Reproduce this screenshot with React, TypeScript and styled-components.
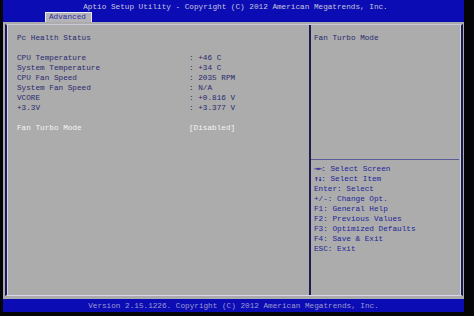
import React from 'react';
import styled, { createGlobalStyle } from 'styled-components';

interface InfoRow {
  label: string;
  value: string;
}

interface HelpLine {
  keys: string;
  glyph?: boolean;
  text: string;
}

const rows: InfoRow[] = [
  { label: 'CPU Temperature', value: ': +46 C' },
  { label: 'System Temperature', value: ': +34 C' },
  { label: 'CPU Fan Speed', value: ': 2035 RPM' },
  { label: 'System Fan Speed', value: ': N/A' },
  { label: 'VCORE', value: ': +0.816 V' },
  { label: '+3.3V', value: ': +3.377 V' },
];

const helpLines: HelpLine[] = [
  { keys: '\u2192\u2190', glyph: true, text: ': Select Screen' },
  { keys: '\u2191\u2193', glyph: true, text: ': Select Item' },
  { keys: 'Enter', text: ': Select' },
  { keys: '+/-', text: ': Change Opt.' },
  { keys: 'F1', text: ': General Help' },
  { keys: 'F2', text: ': Previous Values' },
  { keys: 'F3', text: ': Optimized Defaults' },
  { keys: 'F4', text: ': Save & Exit' },
  { keys: 'ESC', text: ': Exit' },
];

const GlobalStyle = createGlobalStyle`
  html, body {
    margin: 0;
    padding: 0;
    background: #050508;
  }
  body {
    font-family: "Liberation Mono", "DejaVu Sans Mono", monospace;
  }
`;

const Screen = styled.div`
  width: 474px;
  height: 316px;
  background: #050508;
  padding: 0 10px 0 3px;
  box-sizing: border-box;
  display: flex;
  flex-direction: column;
  font-size: 7.7px;
  line-height: 10px;
`;

const TopBar = styled.div`
  height: 22px;
  background: #0c0cb4;
  display: flex;
  flex-direction: column;
  flex-shrink: 0;
`;

const Title = styled.div`
  height: 12px;
  line-height: 15px;
  text-align: center;
  color: #c6c6dc;
  padding-left: 4px;
`;

const Tabs = styled.div`
  display: flex;
  padding-left: 42px;
  height: 10px;
`;

const Tab = styled.div`
  background: #b4b4b8;
  color: #2a2aa0;
  padding: 0 5px 0 3px;
  border-top: 1px solid #e8e8f0;
  border-left: 1px solid #e8e8f0;
  border-right: 1px solid #e8e8f0;
  line-height: 9px;
`;

const Panel = styled.div`
  height: 277px;
  background: #acacac;
  padding: 2px 1px 3px 2px;
  box-sizing: border-box;
  flex-shrink: 0;
`;

const Frame = styled.div`
  height: 100%;
  display: grid;
  grid-template-columns: 304px 1fr;
  border-left: 2px solid #1c1c50;
  border-right: 2px solid #1c1c50;
  border-bottom: 1px solid #d8d8ec;
  border-top: 1px solid #c8c8d8;
  box-shadow: inset 1px 0 0 #d0d0ee, inset -1px 0 0 #d0d0ee;
  box-sizing: border-box;
`;

const LeftPane = styled.div`
  padding: 8px 0 0 10px;
  border-right: 2px solid #1c1c50;
  display: flex;
  flex-direction: column;
`;

const Heading = styled.div`
  color: #2a2a70;
  margin-bottom: 10px;
`;

const Row = styled.div<{ $highlight?: boolean }>`
  display: grid;
  grid-template-columns: 172px 1fr;
  color: ${p => (p.$highlight ? '#f4f4f8' : '#2a2a70')};
`;

const Spacer = styled.div`
  height: 10px;
`;

const RightPane = styled.div`
  display: flex;
  flex-direction: column;
`;

const HelpTop = styled.div`
  height: 126px;
  padding: 8px 0 0 3px;
  color: #2a2a70;
  border-bottom: 1px solid #5a5a96;
  margin-right: 2px;
`;

const HelpKeys = styled.div`
  padding: 4px 0 0 3px;
  color: #24249a;
`;

const Keys = styled.span<{ $glyph?: boolean }>`
  font-family: ${p => (p.$glyph ? '"DejaVu Sans Mono", monospace' : 'inherit')};
  font-weight: ${p => (p.$glyph ? 700 : 400)};
  letter-spacing: ${p => (p.$glyph ? '-1px' : '0')};
`;

const Footer = styled.div`
  height: 13px;
  background: #0c0cb4;
  color: #9a9ad0;
  text-align: center;
  line-height: 14px;
  flex-shrink: 0;
`;

export default function App() {
  return (
    <>
      <GlobalStyle />
      <Screen>
        <TopBar>
          <Title>Aptio Setup Utility - Copyright (C) 2012 American Megatrends, Inc.</Title>
          <Tabs>
            <Tab>Advanced</Tab>
          </Tabs>
        </TopBar>
        <Panel>
          <Frame>
            <LeftPane>
              <Heading>Pc Health Status</Heading>
              {rows.map(r => (
                <Row key={r.label}>
                  <span>{r.label}</span>
                  <span>{r.value}</span>
                </Row>
              ))}
              <Spacer />
              <Row $highlight>
                <span>Fan Turbo Mode</span>
                <span>[Disabled]</span>
              </Row>
            </LeftPane>
            <RightPane>
              <HelpTop>Fan Turbo Mode</HelpTop>
              <HelpKeys>
                {helpLines.map(l => (
                  <div key={l.text}>
                    <Keys $glyph={l.glyph}>{l.keys}</Keys>
                    {l.text}
                  </div>
                ))}
              </HelpKeys>
            </RightPane>
          </Frame>
        </Panel>
        <Footer>Version 2.15.1226. Copyright (C) 2012 American Megatrends, Inc.</Footer>
      </Screen>
    </>
  );
}
